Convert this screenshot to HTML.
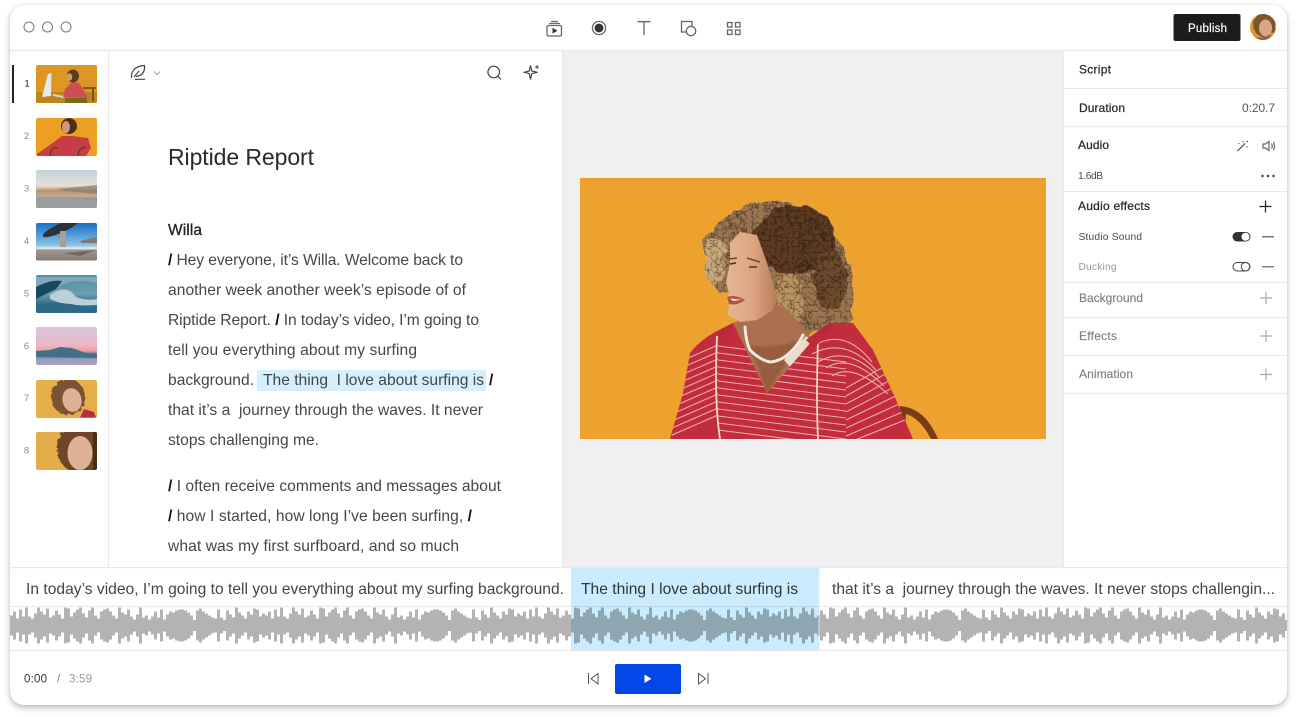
<!DOCTYPE html>
<html lang="en">
<head>
<meta charset="utf-8">
<title>Riptide Report</title>
<style>
html,body{margin:0;padding:0;background:#fff;width:1297px;height:717px;overflow:hidden}
#win{position:absolute;left:10px;top:5px;width:1277px;height:700px;border-radius:14px;background:#fff;box-shadow:0 3px 7px rgba(0,0,0,.24),0 0 3px rgba(0,0,0,.08)}
svg#main{position:absolute;left:0;top:0}
text{font-family:"Liberation Sans",sans-serif;white-space:pre}
.t{font-size:15.6px;fill:#464646}
.h{font-size:12px;fill:#2a2a2a;stroke:#2a2a2a;stroke-width:.25}
.g{font-size:12px;fill:#808080;stroke:#808080;stroke-width:.15}
.s{font-size:10.2px;fill:#4a4a4a}
.n{font-size:9.5px;fill:#8a8a8a;text-anchor:middle}
.ic{fill:none;stroke:#444;stroke-width:1.2}
</style>
</head>
<body>
<div id="win"></div>
<svg id="main" width="1297" height="717" viewBox="0 0 1297 717" xmlns="http://www.w3.org/2000/svg">
<defs>
<filter id="tex" x="-15%" y="-15%" width="130%" height="130%" color-interpolation-filters="sRGB">
<feTurbulence type="fractalNoise" baseFrequency=".07" numOctaves="2" seed="4" result="n1"/>
<feDisplacementMap in="SourceGraphic" in2="n1" scale="11" xChannelSelector="R" yChannelSelector="G" result="d"/>
<feTurbulence type="turbulence" baseFrequency=".17" numOctaves="3" seed="7" result="n2"/>
<feColorMatrix in="n2" type="matrix" values="2.2 0 0 0 .42 2.2 0 0 0 .42 2.2 0 0 0 .42 0 0 0 0 1" result="m"/>
<feBlend in="d" in2="m" mode="multiply" result="b"/>
<feComposite in="b" in2="d" operator="in"/>
</filter>
<filter id="curl2" x="-20%" y="-20%" width="140%" height="140%">
<feTurbulence type="fractalNoise" baseFrequency=".28" numOctaves="2" seed="9"/>
<feDisplacementMap in="SourceGraphic" scale="5"/>
</filter>
<filter id="b1"><feGaussianBlur stdDeviation="1"/></filter>
<filter id="b3"><feGaussianBlur stdDeviation="4"/></filter>
<clipPath id="sw"><path d="M670 439L683 393L690 353Q700 340 717 331L733 323L767 393L813 340L830 323L853 323L873 350L893 393L913 439Z"/></clipPath>
<clipPath id="av"><circle cx="1263" cy="27" r="13"/></clipPath>
<clipPath id="tr"><rect width="61" height="38" rx="2"/></clipPath>
<linearGradient id="fc" x1="0" y1="0" x2="1" y2="0"><stop offset="0" stop-color="#e6b596"/><stop offset=".55" stop-color="#dba581"/><stop offset="1" stop-color="#b67c59"/></linearGradient>
<path id="w" d="M1.5-10V10M4.5-14V14M7.5-7V7M10.5-16V16M13.5-9V9M16.5-18V18M19.5-9V9M22.5-7V7M25.5-12V12M28.5-18V18M31.5-14V14M34.5-11V11M37.5-17V17M40.5-8V8M43.5-10V10M46.5-15V15M49.5-11V11M52.5-7V7M55.5-18V18M58.5-17V17M61.5-9V9M64.5-13V13M67.5-16V16M70.5-18V18M73.5-12V12M76.5-8V8M79.5-15V15M82.5-18V18M85.5-10V10M88.5-7V7M91.5-14V14M94.5-16V16M97.5-17V17M100.5-14V14M103.5-10V10M106.5-7V7M109.5-18V18M112.5-13V13M115.5-11V11M118.5-16V16M121.5-9V9M124.5-6V6M127.5-11V11M130.5-18V18M133.5-8V8M136.5-10V10M139.5-6V6M142.5-9V9M145.5-14V14M148.5-8V8M151.5-16V16M154.5-6V6M157.5-11V11M160.5-14V14M163.5-13V13M166.5-15V15M169.5-16V16M172.5-16V16M175.5-15V15M178.5-13V13M181.5-10V10M184.5-5V5M187.5-15V15M190.5-17V17M193.5-14V14M196.5-12V12M199.5-10V10M202.5-8V8M205.5-7V7M208.5-16V16M211.5-8V8M214.5-5V5M217.5-15V15M220.5-11V11M223.5-8V8M226.5-18V18M229.5-13V13M232.5-10V10M235.5-7V7M238.5-14V14M241.5-11V11M244.5-17V17M247.5-16V16M250.5-9V9M253.5-12V12" stroke="#b3b3b3" stroke-width="3" fill="none"/>
<linearGradient id="sk3" x1="0" y1="0" x2="0" y2="1"><stop offset="0" stop-color="#bfd4da"/><stop offset=".42" stop-color="#e6dfd6"/><stop offset=".55" stop-color="#b9926f"/><stop offset=".68" stop-color="#c9ab92"/><stop offset=".75" stop-color="#8f9698"/><stop offset="1" stop-color="#a5a8a8"/></linearGradient>
<linearGradient id="sk4" x1="0" y1="0" x2="0" y2="1"><stop offset="0" stop-color="#1470c4"/><stop offset=".6" stop-color="#8cc3e2"/><stop offset=".68" stop-color="#e9f1f2"/><stop offset=".72" stop-color="#a09690"/><stop offset="1" stop-color="#857a74"/></linearGradient>
<linearGradient id="sk5" x1="0" y1="0" x2="0" y2="1"><stop offset="0" stop-color="#4f8ea6"/><stop offset=".5" stop-color="#6d9db0"/><stop offset=".75" stop-color="#326f90"/><stop offset="1" stop-color="#2e6a88"/></linearGradient>
<linearGradient id="sk6" x1="0" y1="0" x2="0" y2="1"><stop offset="0" stop-color="#d8c5dc"/><stop offset=".45" stop-color="#eab9c8"/><stop offset=".62" stop-color="#f0a0a4"/><stop offset=".72" stop-color="#477a94"/><stop offset=".86" stop-color="#9a9fc0"/><stop offset="1" stop-color="#b49cc0"/></linearGradient>
</defs>

<!-- title bar dots -->
<g fill="none" stroke="#777" stroke-width="1">
<circle cx="29" cy="27" r="5"/><circle cx="47.5" cy="27" r="5"/><circle cx="66" cy="27" r="5"/>
</g>

<!-- toolbar icons -->
<g fill="none" stroke="#666" stroke-width="1.3">
<rect x="547" y="25.5" width="14.5" height="10.500" rx="1.500"/>
<path d="M549 23.500H560M551 21.500H558"/>
<path d="M552.500 27.800L557.500 30.700L552.500 33.600Z" fill="#333" stroke="none"/>
<circle cx="599" cy="28" r="6.600"/>
<circle cx="599" cy="28" r="4.400" fill="#333" stroke="none"/>
<path d="M637.500 21.700H650.500M644 21.700V35"/>
<path d="M687 32H681.500V21.500H692V26"/>
<circle cx="691" cy="31" r="4.700"/>
<rect x="727.500" y="22.500" width="4.500" height="4.500"/><rect x="735.500" y="22.500" width="4.500" height="4.500"/>
<rect x="727.500" y="30" width="4.500" height="4.500"/><rect x="735.500" y="30" width="4.500" height="4.500"/>
</g>

<!-- publish + avatar -->
<rect x="1173.500" y="14" width="67" height="27" rx="2" fill="#1c1c1c"/>
<text x="1188" y="32" font-size="11.500" fill="#fff" textLength="39" stroke="#fff" stroke-width=".2">Publish</text>
<g clip-path="url(#av)">
<rect x="1250" y="14" width="26" height="26" fill="#d99a3a"/>
<ellipse cx="1264.500" cy="25" rx="11.500" ry="12" fill="#80522e" filter="url(#curl2)"/>
<ellipse cx="1265.500" cy="28" rx="6.500" ry="8.500" fill="#d8a688"/>
<rect x="1250" y="37.500" width="26" height="4" fill="#a9543c"/>
</g>

<!-- structural panels -->
<rect x="563" y="51" width="500" height="516" fill="#f0f0f0"/>
<g fill="#e9e9e9">
<rect x="10" y="50" width="1277" height="1.300"/>
<rect x="10" y="567" width="1277" height="1.200"/>
<rect x="10" y="606" width="1277" height="1"/>
<rect x="10" y="650" width="1277" height="1.200"/>
<rect x="108" y="51" width="1" height="516"/>
<rect x="562" y="51" width="1" height="516"/>
<rect x="1063" y="51" width="1" height="516"/>
<rect x="1064" y="88" width="223" height="1"/>
<rect x="1064" y="126" width="223" height="1"/>
<rect x="1064" y="191" width="223" height="1"/>
<rect x="1064" y="282" width="223" height="1"/>
<rect x="1064" y="317" width="223" height="1"/>
<rect x="1064" y="355" width="223" height="1"/>
<rect x="1064" y="393" width="223" height="1"/>
</g>

<!-- slide numbers -->
<rect x="12" y="65" width="2" height="38" fill="#222"/>
<text class="n" x="27" y="86.500" style="fill:#222">1</text>
<text class="n" x="26.500" y="139">2</text>
<text class="n" x="26.500" y="191.500">3</text>
<text class="n" x="26.500" y="244">4</text>
<text class="n" x="26.500" y="296.500">5</text>
<text class="n" x="26.500" y="349">6</text>
<text class="n" x="26.500" y="401">7</text>
<text class="n" x="26.500" y="453.500">8</text>

<!-- thumb 1 -->
<svg x="36" y="65" width="61" height="38" viewBox="0 0 61 38"><g clip-path="url(#tr)">
<rect width="61" height="38" fill="#dc9621"/>
<rect y="27" width="61" height="11" fill="#bd861d"/>
<path d="M6 32L12 9L15.500 8L15 31Z" fill="#e8e8e8"/>
<path d="M17 29L28 31V33L17 31Z" fill="#d9d5c8"/>
<path d="M27 32L29 24L36 17L43 18L50 29L52 33Z" fill="#cc4f52"/>
<ellipse cx="37" cy="11" rx="6" ry="6.500" fill="#5b3a22"/>
<ellipse cx="33.500" cy="12" rx="2.800" ry="3.800" fill="#cf9a70"/>
<rect x="29" y="33" width="22" height="5" fill="#7a6a1c"/>
<path d="M47 23H60M57 23V36" stroke="#6d3f1c" stroke-width="1.500" fill="none"/>
</g></svg>
<!-- thumb 2 -->
<svg x="36" y="118" width="61" height="38" viewBox="0 0 61 38"><g clip-path="url(#tr)">
<rect width="61" height="38" fill="#eba023"/>
<path d="M1 36L18 24L26 18L36 18L52 20L55 30L50 38H1Z" fill="#c83c48"/>
<ellipse cx="33" cy="8" rx="8" ry="8" fill="#4c3020"/>
<ellipse cx="30" cy="9" rx="4" ry="6" fill="#cf9a76"/>
<path d="M14 38Q15 28 22 30M42 38Q43 28 50 30" stroke="#6d3a1a" stroke-width="1.500" fill="none"/>
</g></svg>
<!-- thumb 3 -->
<svg x="36" y="170" width="61" height="38" viewBox="0 0 61 38"><g clip-path="url(#tr)">
<rect width="61" height="38" fill="url(#sk3)"/>
<path d="M20 19L61 15V24L30 21Z" fill="#8b7a68" opacity=".7"/>
<path d="M0 30Q25 24 61 32V38H0Z" fill="#9a9e9e"/>
</g></svg>
<!-- thumb 4 -->
<svg x="36" y="223" width="61" height="38" viewBox="0 0 61 38"><g clip-path="url(#tr)">
<rect width="61" height="37.500" fill="url(#sk4)"/>
<ellipse cx="25" cy="5" rx="20" ry="4.500" transform="rotate(-24 25 5)" fill="#2c3238"/>
<rect x="24" y="8" width="6" height="16" fill="#a9a09a"/>
<path d="M44 18L61 14V20H46Z" fill="#7c7a76"/>
<path d="M28 30L60 27L44 33Z" fill="#5e5954" opacity=".7"/>
</g></svg>
<!-- thumb 5 -->
<svg x="36" y="275" width="61" height="38" viewBox="0 0 61 38"><g clip-path="url(#tr)">
<rect width="61" height="38" fill="url(#sk5)"/>
<path d="M0 2H61V8Q35 2 18 14L0 20Z" fill="#7fa9b8"/>
<path d="M0 12Q16 4 26 6L20 14L0 24Z" fill="#16485f"/>
<path d="M14 20Q30 8 40 22Q50 26 61 24V30Q30 32 14 24Z" fill="#bcd0d8"/>
<path d="M0 30Q30 24 61 36V38H0Z" fill="#2e6a88"/>
</g></svg>
<!-- thumb 6 -->
<svg x="36" y="327" width="61" height="38" viewBox="0 0 61 38"><g clip-path="url(#tr)">
<rect width="61" height="38" fill="url(#sk6)"/>
<path d="M0 24L14 23L24 20L36 21L50 26L61 27V31L0 30Z" fill="#416f88"/>
</g></svg>
<!-- thumb 7 -->
<svg x="36" y="380" width="61" height="38" viewBox="0 0 61 38"><g clip-path="url(#tr)">
<rect width="61" height="38" fill="#e6ae4a"/>
<ellipse cx="32" cy="17" rx="17" ry="18" fill="#7a5230" filter="url(#curl2)"/>
<ellipse cx="36" cy="20" rx="9.500" ry="12" fill="#deb296" transform="rotate(-12 36 20)"/>
<path d="M44 37.500L48 29L58 32L60 37.500Z" fill="#b52f38"/>
</g></svg>
<!-- thumb 8 -->
<svg x="36" y="432" width="61" height="38" viewBox="0 0 61 38"><g clip-path="url(#tr)">
<rect width="61" height="38" fill="#e3ac4a"/>
<ellipse cx="46" cy="16" rx="25" ry="26" fill="#6e4628" filter="url(#curl2)"/>
<ellipse cx="44" cy="21" rx="12.500" ry="17" fill="#dfb297"/>
<rect x="57" y="0" width="4" height="38" fill="#4a2c1a"/>
</g></svg>

<!-- editor toolbar -->
<g class="ic">
<path d="M131.500 78C131 71 135 66 144.500 65.500C145 71 143 75.500 136 76.500M135 79.300H145M134 77L139 71"/>
<path d="M154 71.500L157 74.500L160 71.500" stroke="#999" stroke-width="1"/>
<circle cx="493.700" cy="72" r="5.800"/>
<path d="M498 76.500L501 79.500"/>
<path d="M530.500 65.500L531.800 71L537.500 72.300L531.800 73.600L530.500 79.500L529.200 73.600L524.500 72.300L529.200 71Z"/>
<path d="M537 65V69M535 67H539" stroke-width="1"/>
</g>

<!-- document text -->
<text x="168" y="165" font-size="23" fill="#2a2a2a" textLength="146">Riptide Report</text>
<rect x="257" y="370" width="229" height="21" fill="#d6effd"/>
<text x="168" y="235" font-size="15.500" fill="#222" stroke="#222" stroke-width=".3" textLength="34">Willa</text>
<text class="t" x="168" y="265" textLength="295"><tspan font-weight="700" fill="#111">/</tspan> Hey everyone, it’s Willa. Welcome back to</text>
<text class="t" x="168" y="295" textLength="298">another week another week’s episode of of</text>
<text class="t" x="168" y="325" textLength="311">Riptide Report. <tspan font-weight="700" fill="#111">/</tspan> In today’s video, I’m going to</text>
<text class="t" x="168" y="355" textLength="249">tell you everything about my surfing</text>
<text class="t" x="168" y="385" textLength="86">background.</text>
<text class="t" x="263" y="385" textLength="221">The thing  I love about surfing is</text>
<text class="t" x="489" y="385" font-weight="700" style="fill:#111">/</text>
<text class="t" x="168" y="415" textLength="315">that it’s a  journey through the waves. It never</text>
<text class="t" x="168" y="445" textLength="151">stops challenging me.</text>
<text class="t" x="168" y="491" textLength="333"><tspan font-weight="700" fill="#111">/</tspan> I often receive comments and messages about</text>
<text class="t" x="168" y="521" textLength="304"><tspan font-weight="700" fill="#111">/</tspan> how I started, how long I’ve been surfing, <tspan font-weight="700" fill="#111">/</tspan></text>
<text class="t" x="168" y="551" textLength="291">what was my first surfboard, and so much</text>

<!-- preview -->
<svg x="580" y="178" width="466" height="261" viewBox="580 178 466 261">
<rect x="580" y="178" width="466" height="261" fill="#eda22f"/>
<path d="M897 439L900 406Q925 408 938 439H931Q920 418 906 414L904 439Z" fill="#7a3a1a"/>
<!-- hair -->
<g filter="url(#tex)">
<path d="M703 243L720 220L750 203L777 200L807 210L827 223L843 247L852 273L852 307L853 320L827 327L807 335L790 330L772 300L740 290L720 293L710 277L705 263Z" fill="#9a7550"/>
<ellipse cx="795" cy="240" rx="42" ry="34" fill="#5c3a22"/>
<ellipse cx="830" cy="280" rx="16" ry="30" fill="#6e4a2c"/>
<ellipse cx="715" cy="262" rx="11" ry="24" fill="#c9a97c"/>
<ellipse cx="790" cy="300" rx="14" ry="26" fill="#b8935f"/>
</g>
<!-- neck / chest -->
<path d="M745 318L733 323L767 393L813 340L805 330L790 312L770 300Z" fill="#ab7050"/>
<path d="M750 345Q770 350 800 340L767 393Z" fill="#8e5439" opacity=".7" filter="url(#b1)"/>
<!-- face -->
<path d="M740 232L757 235L767 263L777 297L773 310L757 320L740 322L728 315L729 305L727 300L729 293L726 283L730 262L730 243Z" fill="url(#fc)"/>
<path d="M729 259L737 258M747 258L760 262" stroke="#6a4630" stroke-width="1.500" fill="none"/>
<path d="M730 264L736 263M749 267L757 267" stroke="#4a3328" stroke-width="1.600" fill="none"/>
<path d="M727 297Q735 294 745 300Q737 306 729 304Z" fill="#b05248"/>
<path d="M730 298.500L742 299.800L733 301Z" fill="#f4e4d8"/>
<!-- collar -->
<path d="M723 347L733 328L752 375L746 380Z" fill="#e9dccb"/>
<path d="M790 367L812 341L806 336L784 360Z" fill="#e9dccb"/>
<!-- sweater -->
<g clip-path="url(#sw)">
<rect x="660" y="320" width="260" height="120" fill="#c32c3d"/>
<g fill="none" stroke="#eed2ca" stroke-width="1.100" opacity=".8">
<path d="M672 365L718 345M672 372L718 352M672 379L718 359M672 386L718 366M672 393L718 373M672 400L718 380M672 407L718 387M672 414L718 394M672 421L718 401M672 428L718 408M672 435L718 415"/>
<path d="M718 346L846 362M718 353L846 369M718 360L846 376M718 367L846 383M718 374L846 390M718 381L846 397M718 388L846 404M718 395L846 411M718 402L846 418M718 409L846 425M718 416L846 432M718 423L846 439M718 430L846 446"/>
<path d="M846 388L896 360M846 396L896 368M846 404L898 376M846 412L900 384M846 420L904 392M846 428L908 400M846 436L912 408M850 442L915 416"/>
<path d="M815 345Q845 328 872 362M812 354Q845 336 876 370M818 362Q848 344 880 378M826 368Q850 352 884 386M832 376Q852 362 888 394"/>
</g>
</g>
<path d="M717 336Q714 400 720 439M818 340Q816 400 818 439" fill="none" stroke="#ead8cc" stroke-width="1.800"/>
<path d="M718 331L733 323L726 347L720 340Z" fill="#b92a3a"/>
<path d="M806 340L830 322L834 328L814 348Z" fill="#b92a3a"/>
<!-- necklace -->
<path d="M745 327Q746 342 750 350Q760 360 770 362Q780 361 787 355Q797 347 803 335" fill="none" stroke="#f1e9e0" stroke-width="3" stroke-linecap="round" stroke-dasharray="3 1.500"/>
</svg>

<!-- right panel -->
<text class="h" x="1079" y="73.500" textLength="32">Script</text>
<text class="h" x="1079" y="112" textLength="46">Duration</text>
<text x="1242" y="112" font-size="12" fill="#555" textLength="33">0:20.7</text>
<text class="h" x="1078" y="149" textLength="31">Audio</text>
<g class="ic" stroke-width="1">
<path d="M1237.500 151L1245 143.500"/>
<path d="M1243 141V142.500M1247 146V147.500M1239 143V144M1246.500 141.500H1248" stroke-width="1"/>
<path d="M1263 144H1265.500L1269 141.500V150.500L1265.500 148H1263ZM1271.500 143.500Q1273 146 1271.500 148.500M1273.500 142Q1275.500 146 1273.500 150" stroke="#666"/>
</g>
<text class="s" x="1078" y="179" textLength="25">1.6dB</text>
<g fill="#333"><circle cx="1262.500" cy="176" r="1.200"/><circle cx="1268" cy="176" r="1.200"/><circle cx="1273.500" cy="176" r="1.200"/></g>
<text class="h" x="1078" y="210" textLength="72">Audio effects</text>
<path d="M1259.500 206.500H1271.500M1265.500 200.500V212.500" stroke="#222" stroke-width="1.200"/>
<text class="s" x="1078.500" y="240" textLength="63.500">Studio Sound</text>
<rect x="1232.500" y="232" width="18" height="9.500" rx="4.750" fill="#333"/>
<circle cx="1245.500" cy="236.750" r="4" fill="#fff"/>
<path d="M1262 236.800H1274" stroke="#555" stroke-width="1.200"/>
<text class="s" x="1078.500" y="270" textLength="38" style="fill:#999">Ducking</text>
<rect x="1233" y="262.500" width="17" height="8.500" rx="4.250" fill="none" stroke="#444"/>
<circle cx="1245.500" cy="266.750" r="4.250" fill="none" stroke="#444"/>
<path d="M1262 266.800H1274" stroke="#666" stroke-width="1.200"/>
<text class="g" x="1079" y="302" textLength="64">Background</text>
<text class="g" x="1079" y="340" textLength="38">Effects</text>
<text class="g" x="1079" y="378" textLength="54">Animation</text>
<path d="M1260 298H1272M1266 292V304M1260 336H1272M1266 330V342M1260 374.500H1272M1266 368.500V380.500" stroke="#aaa" stroke-width="1.200" fill="none"/>

<!-- transcript -->
<text x="26" y="594" font-size="15.600" fill="#444" textLength="538">In today’s video, I’m going to tell you everything about my surfing background.</text>
<text x="581" y="594" font-size="15.600" fill="#3a3a3a" textLength="217">The thing I love about surfing is</text>
<text x="832" y="594" font-size="15.600" fill="#444" textLength="443">that it’s a  journey through the waves. It never stops challengin...</text>

<!-- waveform -->
<g>
<rect x="10" y="620" width="1277" height="11" fill="#b3b3b3"/>
<use href="#w" x="10" y="625.500"/><use href="#w" x="265" y="625.500"/><use href="#w" x="520" y="625.500"/><use href="#w" x="775" y="625.500"/><use href="#w" x="1030" y="625.500"/>
</g>
<rect x="571" y="568" width="247.500" height="82" fill="#cbebfe" style="mix-blend-mode:multiply"/>
<rect x="818.500" y="568" width="1" height="82" fill="#e4e4e4"/>

<!-- footer -->
<text x="24" y="682.500" font-size="11.500" fill="#333" textLength="23">0:00</text>
<text x="57" y="682.500" font-size="11.500" fill="#888">/</text>
<text x="69" y="682.500" font-size="11.500" fill="#999" textLength="23">3:59</text>
<g fill="none" stroke="#555" stroke-width="1">
<path d="M588.500 673V684M598 673.500V684L591 678.700Z"/>
<path d="M708 673V684M698.500 673.500V684L705.500 678.700Z"/>
</g>
<rect x="615" y="664" width="66" height="30" rx="2" fill="#0047e6"/>
<path d="M644.500 674.500L651.500 678.700L644.500 683Z" fill="#fff"/>
</svg>
</body>
</html>
